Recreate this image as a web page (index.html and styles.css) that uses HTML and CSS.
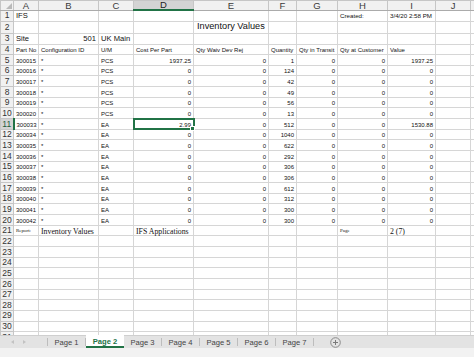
FILE: index.html
```html
<!DOCTYPE html>
<html lang="en">
<head>
    <meta charset="UTF-8">
    <title>Inventory Values - Page 2</title>
    <link rel="stylesheet" href="styles.css">
</head>
<body>
<div class="grid">
    <table class="sheet">
        <colgroup>
            <col class="w-rh"><col class="w-a"><col class="w-b"><col class="w-c"><col class="w-d"><col class="w-e">
            <col class="w-f"><col class="w-g"><col class="w-h"><col class="w-i"><col class="w-j"><col class="w-k">
        </colgroup>
        <tr class="colhead">
            <th class="corner"><span class="tri"></span></th>
            <th>A</th><th>B</th><th>C</th><th class="sel">D</th><th>E</th><th>F</th><th>G</th><th>H</th><th>I</th><th>J</th><th></th>
        </tr>
        <tr class="r1">
            <th>1</th><td class="big">IFS</td><td></td><td></td><td></td><td></td><td></td><td></td>
            <td class="small">Created:</td><td class="small">3/4/20 2:58 PM</td><td></td><td></td>
        </tr>
        <tr class="r2">
            <th>2</th><td></td><td></td><td></td><td></td><td class="title">Inventory Values</td><td></td><td></td><td></td><td></td><td></td><td></td>
        </tr>
        <tr class="r3">
            <th>3</th><td class="big">Site</td><td class="big num">501</td><td class="big">UK Main</td><td></td><td></td><td></td><td></td><td></td><td></td><td></td><td></td>
        </tr>
        <tr>
            <th>4</th><td>Part No</td><td>Configuration ID</td><td>U/M</td><td>Cost Per Part</td><td>Qty Waiv Dev Rej</td>
            <td>Quantity</td><td>Qty in Transit</td><td>Qty at Customer</td><td>Value</td><td></td><td></td>
        </tr>
        <tr><th>5</th><td class="num">300015</td><td>*</td><td>PCS</td><td class="num">1937.25</td><td class="num">0</td><td class="num">1</td><td class="num">0</td><td class="num">0</td><td class="num">1937.25</td><td></td><td></td></tr>
        <tr><th>6</th><td class="num">300016</td><td>*</td><td>PCS</td><td class="num">0</td><td class="num">0</td><td class="num">124</td><td class="num">0</td><td class="num">0</td><td class="num">0</td><td></td><td></td></tr>
        <tr><th>7</th><td class="num">300017</td><td>*</td><td>PCS</td><td class="num">0</td><td class="num">0</td><td class="num">42</td><td class="num">0</td><td class="num">0</td><td class="num">0</td><td></td><td></td></tr>
        <tr><th>8</th><td class="num">300018</td><td>*</td><td>PCS</td><td class="num">0</td><td class="num">0</td><td class="num">49</td><td class="num">0</td><td class="num">0</td><td class="num">0</td><td></td><td></td></tr>
        <tr><th>9</th><td class="num">300019</td><td>*</td><td>PCS</td><td class="num">0</td><td class="num">0</td><td class="num">56</td><td class="num">0</td><td class="num">0</td><td class="num">0</td><td></td><td></td></tr>
        <tr><th>10</th><td class="num">300020</td><td>*</td><td>PCS</td><td class="num">0</td><td class="num">0</td><td class="num">13</td><td class="num">0</td><td class="num">0</td><td class="num">0</td><td></td><td></td></tr>
        <tr><th class="sel-row">11</th><td class="num">300033</td><td>*</td><td>EA</td><td class="num active">2.99<span class="handle"></span></td><td class="num">0</td><td class="num">512</td><td class="num">0</td><td class="num">0</td><td class="num">1530.88</td><td></td><td></td></tr>
        <tr><th>12</th><td class="num">300034</td><td>*</td><td>EA</td><td class="num">0</td><td class="num">0</td><td class="num">1040</td><td class="num">0</td><td class="num">0</td><td class="num">0</td><td></td><td></td></tr>
        <tr><th>13</th><td class="num">300035</td><td>*</td><td>EA</td><td class="num">0</td><td class="num">0</td><td class="num">622</td><td class="num">0</td><td class="num">0</td><td class="num">0</td><td></td><td></td></tr>
        <tr><th>14</th><td class="num">300036</td><td>*</td><td>EA</td><td class="num">0</td><td class="num">0</td><td class="num">292</td><td class="num">0</td><td class="num">0</td><td class="num">0</td><td></td><td></td></tr>
        <tr><th>15</th><td class="num">300037</td><td>*</td><td>EA</td><td class="num">0</td><td class="num">0</td><td class="num">306</td><td class="num">0</td><td class="num">0</td><td class="num">0</td><td></td><td></td></tr>
        <tr><th>16</th><td class="num">300038</td><td>*</td><td>EA</td><td class="num">0</td><td class="num">0</td><td class="num">306</td><td class="num">0</td><td class="num">0</td><td class="num">0</td><td></td><td></td></tr>
        <tr><th>17</th><td class="num">300039</td><td>*</td><td>EA</td><td class="num">0</td><td class="num">0</td><td class="num">612</td><td class="num">0</td><td class="num">0</td><td class="num">0</td><td></td><td></td></tr>
        <tr><th>18</th><td class="num">300040</td><td>*</td><td>EA</td><td class="num">0</td><td class="num">0</td><td class="num">312</td><td class="num">0</td><td class="num">0</td><td class="num">0</td><td></td><td></td></tr>
        <tr><th>19</th><td class="num">300041</td><td>*</td><td>EA</td><td class="num">0</td><td class="num">0</td><td class="num">300</td><td class="num">0</td><td class="num">0</td><td class="num">0</td><td></td><td></td></tr>
        <tr><th>20</th><td class="num">300042</td><td>*</td><td>EA</td><td class="num">0</td><td class="num">0</td><td class="num">300</td><td class="num">0</td><td class="num">0</td><td class="num">0</td><td></td><td></td></tr>
        <tr class="serif">
            <th>21</th><td class="tiny">Report:</td><td>Inventory Values</td><td></td><td>IFS Applications</td><td></td><td></td><td></td>
            <td class="tiny">Page</td><td>2 (7)</td><td></td><td></td>
        </tr>
        <tr><th>22</th><td></td><td></td><td></td><td></td><td></td><td></td><td></td><td></td><td></td><td></td><td></td></tr>
        <tr><th>23</th><td></td><td></td><td></td><td></td><td></td><td></td><td></td><td></td><td></td><td></td><td></td></tr>
        <tr><th>24</th><td></td><td></td><td></td><td></td><td></td><td></td><td></td><td></td><td></td><td></td><td></td></tr>
        <tr><th>25</th><td></td><td></td><td></td><td></td><td></td><td></td><td></td><td></td><td></td><td></td><td></td></tr>
        <tr><th>26</th><td></td><td></td><td></td><td></td><td></td><td></td><td></td><td></td><td></td><td></td><td></td></tr>
        <tr><th>27</th><td></td><td></td><td></td><td></td><td></td><td></td><td></td><td></td><td></td><td></td><td></td></tr>
        <tr><th>28</th><td></td><td></td><td></td><td></td><td></td><td></td><td></td><td></td><td></td><td></td><td></td></tr>
        <tr><th>29</th><td></td><td></td><td></td><td></td><td></td><td></td><td></td><td></td><td></td><td></td><td></td></tr>
        <tr><th>30</th><td></td><td></td><td></td><td></td><td></td><td></td><td></td><td></td><td></td><td></td><td></td></tr>
        <tr><th>31</th><td></td><td></td><td></td><td></td><td></td><td></td><td></td><td></td><td></td><td></td><td></td></tr>
    </table>
</div>
<div class="tabbar">
    <div class="nav">
        <span class="arrow left"></span>
        <span class="arrow right"></span>
    </div>
    <div class="tab">Page 1</div>
    <div class="tab current">Page 2</div>
    <div class="tab">Page 3</div>
    <div class="tab">Page 4</div>
    <div class="tab">Page 5</div>
    <div class="tab">Page 6</div>
    <div class="tab">Page 7</div>
    <div class="add">
        <svg width="11" height="11" viewBox="0 0 11 11">
            <circle cx="5.5" cy="5.5" r="4.8" fill="none" stroke="#8a8a8a" stroke-width="1"/>
            <path d="M5.5 3v5M3 5.5h5" stroke="#7a7a7a" stroke-width="1"/>
        </svg>
    </div>
</div>
<div class="status"></div>
</body>
</html>
```
FILE: styles.css
```css
body {
    margin: 0;
    width: 474px;
    height: 357px;
    overflow: hidden;
    font-family: 'Liberation Sans', Arial, sans-serif;
    background: #fff;
}

.grid {
    height: 335px;
    overflow: hidden;
}

.sheet {
    border-collapse: collapse;
    table-layout: fixed;
    width: 500px;
    color: #111;
}

.w-rh { width: 13px; }
.w-a { width: 25px; }
.w-b { width: 60px; }
.w-c { width: 35px; }
.w-d { width: 60px; }
.w-e { width: 75px; }
.w-f { width: 28px; }
.w-g { width: 41px; }
.w-h { width: 50px; }
.w-i { width: 48px; }
.w-j { width: 35px; }
.w-k { width: 30px; }

.sheet tr {
    height: 10.67px;
}

.sheet td {
    border: 1px solid #d6d6d6;
    padding: 0 2px 1px;
    font-size: 6px;
    line-height: 1;
    vertical-align: bottom;
    white-space: nowrap;
    overflow: visible;
}

.sheet th {
    border: 1px solid #c6c6c6;
    background: #f1f1f1;
    color: #333;
    font-weight: normal;
    font-size: 8.5px;
    line-height: 1;
    padding: 0;
    text-align: center;
    vertical-align: middle;
    white-space: nowrap;
}

.sheet .colhead {
    height: 8px;
}

.sheet .colhead th {
    border-bottom-color: #ababab;
    font-size: 9.5px;
    line-height: 8px;
    vertical-align: bottom;
    color: #3a3a3a;
}

.sheet .r1 { height: 11px; }
.sheet .r2 { height: 12px; }
.sheet .r3 { height: 11px; }

.sheet .colhead th.sel {
    background: #d4d4d4;
    color: #1f1f1f;
    border-bottom: 2px solid #217346;
}

.sheet th.sel-row {
    background: #d4d4d4;
    color: #1f5c3a;
    border-right: 2px solid #217346;
}

.corner {
    position: relative;
}

.tri {
    position: absolute;
    right: 1px;
    bottom: 1px;
    width: 0;
    height: 0;
    border-left: 6px solid transparent;
    border-bottom: 6px solid #b9b9b9;
}

.sheet td.big {
    font-size: 7.6px;
}

.sheet td.title {
    font-size: 9.2px;
    padding-left: 3px;
}

.sheet td.small {
    font-size: 6.2px;
}

.sheet td.num {
    text-align: right;
}

.sheet .serif td {
    font-family: 'Liberation Serif', 'Times New Roman', serif;
    font-size: 7.8px;
    padding-bottom: 0;
}

.sheet .serif td.tiny {
    font-size: 5px;
    padding-bottom: 2px;
}

.sheet td.active {
    position: relative;
    outline: 2px solid #217346;
    outline-offset: -1px;
}

.handle {
    position: absolute;
    right: -2px;
    bottom: -2px;
    width: 3px;
    height: 3px;
    background: #217346;
    border: 1px solid #fff;
}

.tabbar {
    height: 13px;
    display: flex;
    align-items: stretch;
    background: #e3e3e3;
    border-top: 1px solid #cfcfcf;
    box-sizing: border-box;
    font-size: 7.6px;
    color: #444;
}

.nav {
    width: 48px;
    display: flex;
    align-items: center;
    gap: 9px;
    padding-left: 11px;
    box-sizing: border-box;
    border-right: 1px solid #bdbdbd;
    margin: 2px 0;
}

.arrow {
    width: 0;
    height: 0;
    border-top: 2px solid transparent;
    border-bottom: 2px solid transparent;
}

.arrow.left {
    border-right: 3px solid #c2c2c2;
}

.arrow.right {
    border-left: 3px solid #c2c2c2;
}

.tab {
    width: 38px;
    box-sizing: border-box;
    display: flex;
    align-items: center;
    justify-content: center;
    border-right: 1px solid #bdbdbd;
    margin: 2px 0;
}

.tab.current {
    margin: 0;
    margin-top: -1px;
    background: #fff;
    color: #217346;
    font-weight: bold;
    border-right: none;
    border-bottom: 2px solid #217346;
    padding-top: 1px;
}

.add {
    width: 42px;
    display: flex;
    align-items: center;
    justify-content: center;
}

.status {
    height: 9px;
    background: #f2f2f2;
}
```
